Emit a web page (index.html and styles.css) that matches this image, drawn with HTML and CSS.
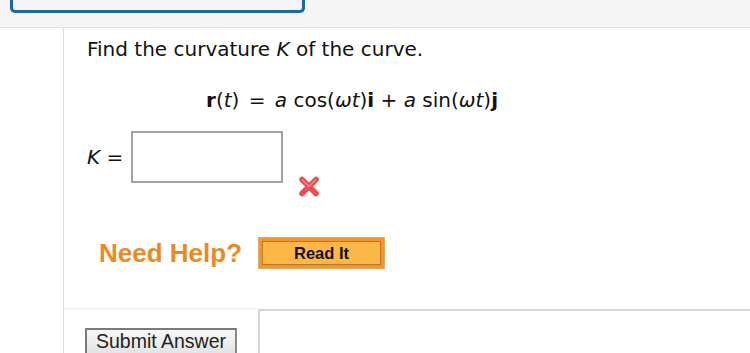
FILE: index.html
```html
<!DOCTYPE html>
<html>
<head>
<meta charset="utf-8">
<link rel="stylesheet" href="styles.css">
</head>
<body>
<div class="topbar"><div class="tabbox"></div></div>
<div class="main">
  <div class="content">
    <p class="question">Find the curvature <i>K</i> of the curve.</p>
    <p class="formula"><b class="vec">r</b>(<i>t</i>) <span class="eq">=</span> <i>a</i> cos(<i>ωt</i>)<b>i</b> + <i>a</i> sin(<i>ωt</i>)<b>j</b></p>
    <div class="answer-row">
      <span class="label"><i>K</i> =</span>
      <span class="input"></span>
      <svg class="wrong" width="22" height="21" viewBox="0 0 22 21">
        <path d="M4 3.5 L18 17.5 M18 3.5 L4 17.5" stroke="#ef4b4f" stroke-width="5.5" stroke-linecap="round" fill="none"/>
        <path d="M4.5 4 L11 10.5 M17.5 4 L11 10.5" stroke="#f7898b" stroke-width="1.6" stroke-linecap="round" fill="none"/>
      </svg>
    </div>
    <div class="help-row">
      <span class="need-help">Need Help?</span>
      <span class="read-it"><span class="read-it-inner">Read It</span></span>
    </div>
  </div>
  <div class="bottom">
    <div class="submit-cell"><button class="submit">Submit Answer</button></div>
    <div class="side-cell"></div>
  </div>
</div>
</body>
</html>
```

FILE: styles.css
```css
html, body {
  margin: 0;
  padding: 0;
  background: #ffffff;
  overflow: hidden;
}
body {
  font-family: "DejaVu Sans", Verdana, sans-serif;
  color: #111;
  height: 353px;
}
.topbar {
  height: 27px;
  background: #f5f5f5;
  border-bottom: 1px solid #e2e2e2;
}
.tabbox {
  margin-left: 10px;
  width: 295px;
  height: 13px;
  box-sizing: border-box;
  border: 3px solid #1c6aa4;
  border-top: none;
  border-radius: 0 0 5px 5px;
  background: #f5f5f5;
}
.main {
  margin-left: 63px;
  border-left: 1px solid #dcdcdc;
  height: 325px;
}
.content {
  padding: 10px 0 0 23px;
}
.question {
  margin: 0;
  font-size: 20px;
  line-height: 23px;
}
.formula {
  margin: 28px 0 0 119px;
  font-size: 20px;
  line-height: 23px;
  white-space: nowrap;
}
.formula b {
  font-weight: bold;
}
.eq {
  margin: 0 3px;
}
.answer-row {
  margin-top: 19px;
  display: flex;
  align-items: flex-start;
}
.label {
  font-size: 20px;
  line-height: 52px;
  width: 44px;
  white-space: nowrap;
}
.input {
  width: 152px;
  height: 52px;
  box-sizing: border-box;
  border: 2px solid #a2a2a2;
  background: #fff;
}
.wrong {
  margin-top: 45px;
  margin-left: 15px;
}
.help-row {
  margin-top: 40px;
  margin-left: 12px;
  display: flex;
  align-items: center;
  height: 32px;
}
.need-help {
  font-family: "Liberation Sans", Arial, sans-serif;
  font-weight: bold;
  font-size: 26px;
  color: #ec8a1e;
}
.read-it {
  margin-left: 16px;
  width: 127px;
  height: 32px;
  box-sizing: border-box;
  border: 1px solid #e7a867;
  background: #f1962a;
  padding: 3px 3px;
  display: flex;
}
.read-it-inner {
  flex: 1;
  border: 1px solid #bd7528;
  background: #fdb744;
  font-family: "Liberation Sans", Arial, sans-serif;
  font-weight: bold;
  font-size: 16.5px;
  color: #111;
  display: flex;
  align-items: center;
  justify-content: center;
}
.bottom {
  margin-top: 39px;
  display: flex;
  height: 60px;
}
.submit-cell {
  width: 194px;
  border-top: 1px solid #ececec;
  padding: 19px 0 0 21px;
  box-sizing: border-box;
}
.submit {
  width: 152px;
  height: 34px;
  margin: 0;
  padding: 0 0 9px;
  font-family: "Liberation Sans", Arial, sans-serif;
  font-size: 19.5px;
  color: #222;
  background: linear-gradient(#f7f7f7, #dedede);
  border: 2px solid #7a7a7a;
  border-right-color: #8a8a8a;
  border-bottom-color: #8a8a8a;
}
.side-cell {
  flex: 1;
  margin-top: 1px;
  border-top: 2px solid #d6d6d6;
  border-left: 2px solid #d6d6d6;
}
```
